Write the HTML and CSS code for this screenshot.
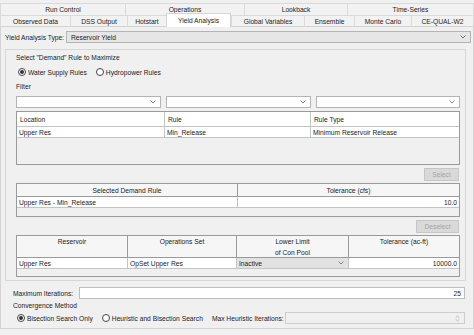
FILE: index.html
```html
<!DOCTYPE html>
<html>
<head>
<meta charset="utf-8">
<link rel="stylesheet" href="styles.css">
</head>
<body>
<div class="app">
  <div class="tabs">
    <div class="tabrow r1">
      <div class="tab w125">Run Control</div>
      <div class="tab w119">Operations</div>
      <div class="tab w103">Lookback</div>
      <div class="tab w127 last">Time-Series</div>
    </div>
    <div class="tabrow r2">
      <div class="tab w70">Observed Data</div>
      <div class="tab w57">DSS Output</div>
      <div class="tab w39">Hotstart</div>
      <div class="tab w65 sel">Yield Analysis</div>
      <div class="tab w73">Global Variables</div>
      <div class="tab w50">Ensemble</div>
      <div class="tab w57">Monte Carlo</div>
      <div class="tab w63 last">CE-QUAL-W2</div>
    </div>
  </div>

  <div class="panel">
    <div class="typerow">
      <span class="typelabel">Yield Analysis Type:</span>
      <div class="combo gray grow">
        <span class="ctext">Reservoir Yield</span>
        <svg class="chev" width="6" height="4" viewBox="0 0 6 4"><path d="M0.5 0.5 L3 3 L5.5 0.5" fill="none" stroke="#666" stroke-width="0.9"/></svg>
      </div>
    </div>

    <div class="group">
      <div class="gtitle">Select "Demand" Rule to Maximize</div>
      <div class="radios top">
        <span class="radio on"></span><span class="rlabel">Water Supply Rules</span>
        <span class="radio"></span><span class="rlabel">Hydropower Rules</span>
      </div>
      <div class="flabel">Filter</div>
      <div class="filters">
        <div class="combo white f1"><span class="ctext"></span><svg class="chev" width="6" height="4" viewBox="0 0 6 4"><path d="M0.5 0.5 L3 3 L5.5 0.5" fill="none" stroke="#777" stroke-width="0.9"/></svg></div>
        <div class="combo white f2"><span class="ctext"></span><svg class="chev" width="6" height="4" viewBox="0 0 6 4"><path d="M0.5 0.5 L3 3 L5.5 0.5" fill="none" stroke="#777" stroke-width="0.9"/></svg></div>
        <div class="combo white f3"><span class="ctext"></span><svg class="chev" width="6" height="4" viewBox="0 0 6 4"><path d="M0.5 0.5 L3 3 L5.5 0.5" fill="none" stroke="#777" stroke-width="0.9"/></svg></div>
      </div>

      <div class="tbl t1">
        <div class="trow h1">
          <div class="cell">Location</div><div class="cell">Rule</div><div class="cell nb">Rule Type</div>
        </div>
        <div class="trow d1">
          <div class="cell">Upper Res</div><div class="cell">Min_Release</div><div class="cell nb">Minimum Reservoir Release</div>
        </div>
      </div>

      <div class="btnrow"><div class="btn bsel">Select</div></div>

      <div class="tbl t2">
        <div class="trow h2">
          <div class="hcell">Selected Demand Rule</div><div class="hcell nb">Tolerance (cfs)</div>
        </div>
        <div class="trow d2">
          <div class="cell">Upper Res - Min_Release</div><div class="cell nb num">10.0</div>
        </div>
      </div>

      <div class="btnrow"><div class="btn bdes">Deselect</div></div>

      <div class="tbl t3">
        <div class="trow h3">
          <div class="hcell">Reservoir</div><div class="hcell">Operations Set</div><div class="hcell">Lower Limit<br>of Con Pool</div><div class="hcell nb">Tolerance (ac-ft)</div>
        </div>
        <div class="trow d3">
          <div class="cell">Upper Res</div><div class="cell">OpSet Upper Res</div>
          <div class="cell cbcell">Inactive<svg class="chev" width="6" height="4" viewBox="0 0 6 4"><path d="M0.5 0.5 L3 3 L5.5 0.5" fill="none" stroke="#777" stroke-width="0.9"/></svg></div>
          <div class="cell nb num">10000.0</div>
        </div>
      </div>
    </div>

    <div class="iterrow">
      <span class="itlabel">Maximum Iterations:</span>
      <div class="field grow num">25</div>
    </div>
    <div class="convlabel">Convergence Method</div>
    <div class="radios bottom">
      <span class="radio on"></span><span class="rlabel">Bisection Search Only</span>
      <span class="radio"></span><span class="rlabel">Heuristic and Bisection Search</span>
      <span class="mhlabel">Max Heuristic Iterations:</span>
      <div class="field disabled grow">
        <svg class="spin" width="5" height="7" viewBox="0 0 5 7"><path d="M0.8 2.6 L2.5 1 L4.2 2.6 M0.8 4.4 L2.5 6 L4.2 4.4" fill="none" stroke="#b0b0b0" stroke-width="0.8"/></svg>
      </div>
    </div>
  </div>
</div>
</body>
</html>
```

FILE: styles.css
```css
* { box-sizing: border-box; }
html, body { margin: 0; padding: 0; }
body {
  width: 474px;
  height: 335px;
  background: #f0f0f0;
  font-family: "Liberation Sans", Arial, sans-serif;
  font-size: 6.7px;
  color: #222;
  overflow: hidden;
}
.app { width: 474px; height: 335px; display: flex; flex-direction: column; }

/* tabs */
.tabs { height: 27px; padding-top: 3px; display: flex; flex-direction: column; background: #f0f0f0; }
.tabrow { display: flex; }
.r1 { height: 12px; }
.r2 { height: 12px; align-items: flex-end; }
.tab {
  display: flex; align-items: center; justify-content: center;
  border-left: 1px solid #dadada;
  border-top: 1px solid #dadada;
  background: #f2f2f2;
  color: #222;
  white-space: nowrap;
  height: 100%;
}
.r1 .tab { padding-bottom: 1px; }
.r2 .tab { border-bottom: 1px solid #d4d4d4; height: 12px; }
.r2 .tab.sel {
  background: #ffffff;
  border: 1px solid #d4d4d4;
  border-bottom: none;
  height: 14px;
  margin-top: -2px;
  padding-bottom: 1px;
}
.tab.last { border-right: 1px solid #dadada; }
.w125 { width: 125px; } .w119 { width: 119px; } .w103 { width: 103px; } .w127 { width: 127px; }
.w70 { width: 70px; } .w57 { width: 57px; } .w39 { width: 39px; } .w65 { width: 65px; }
.w73 { width: 73px; } .w50 { width: 50px; } .w63 { width: 63px; }

/* panel */
.panel {
  height: 302px;
  border-left: 1px solid #d4d4d4;
  border-right: 1px solid #d4d4d4;
  border-bottom: 1px solid #d4d4d4;
  display: flex; flex-direction: column;
  background: #f0f0f0;
}
.typerow { display: flex; align-items: center; height: 12px; margin-top: 4px; padding-left: 4px; padding-right: 2px; }
.typelabel { width: 61px; white-space: nowrap; }
.grow { flex: 1; }
.combo {
  height: 12px; border: 1px solid #b4b4b4;
  display: flex; align-items: center; justify-content: space-between;
  padding: 0 4px 0 4px;
}
.combo.gray { background: #e6e6e6; }
.combo.white { background: #ffffff; }
.ctext { white-space: nowrap; }
.chev { display: block; }

.group {
  margin: 6px 7px 0 4px;
  height: 232px;
  border: 1px solid #d6d6d6;
  padding: 0 5px 0 10px;
  display: flex; flex-direction: column;
}
.gtitle { margin-top: 3px; height: 9px; line-height: 9px; }
.radios { display: flex; align-items: center; }
.radios.top { margin-top: 5px; height: 10px; padding-left: 2px; }
.radio {
  width: 8px; height: 8px; border-radius: 50%;
  border: 1px solid #444; background: #fff;
  display: inline-flex; align-items: center; justify-content: center;
  flex: none;
}
.radio.on::after { content: ""; width: 4px; height: 4px; border-radius: 50%; background: #333; }
.rlabel { margin-left: 2px; margin-right: 9px; white-space: nowrap; }
.flabel { margin-top: 5px; height: 9px; line-height: 9px; }
.filters { margin-top: 5px; display: flex; height: 12px; }
.f1 { width: 145px; margin-right: 5px; }
.f2 { width: 145px; margin-right: 5px; }
.f3 { width: 144px; }

.tbl { border: 1px solid #9a9a9a; background: #f0f0f0; display: flex; flex-direction: column; }
.trow { display: grid; }
.cell { border-right: 1px solid #c4c4c4; padding: 0 2px; white-space: nowrap; display: flex; align-items: center; }
.cell.nb, .hcell.nb { border-right: none; }
.num { justify-content: flex-end; }
.hcell { border-right: 1px solid #9a9a9a; display: flex; justify-content: center; text-align: center; white-space: nowrap; }

.t1 { margin-top: 3px; height: 54px; }
.t1 .trow { grid-template-columns: 148px 146px 1fr; background: #fff; }
.h1 { height: 15px; border-bottom: 1px solid #c4c4c4; }
.h1 .cell { padding-left: 3px; }
.d1 { height: 11px; border-bottom: 1px solid #c4c4c4; }

.btnrow { display: flex; justify-content: flex-end; padding-right: 1px; }
.btn {
  height: 13px; border: 1px solid #c6c6c6; background: #d9d9d9; color: #a6a6a6;
  display: flex; align-items: center; justify-content: center;
}
.bsel { width: 35px; margin-top: 3px; }
.bdes { width: 43px; margin-top: 3px; }

.t2 { margin-top: 2px; height: 34px; }
.t2 .trow { grid-template-columns: 221px 1fr; }
.h2 { height: 13px; background: #f6f6f6; border-bottom: 1px solid #9a9a9a; }
.h2 .hcell { align-items: center; }
.d2 { height: 11px; background: #fff; border-bottom: 1px solid #c4c4c4; }

.t3 { margin-top: 2px; height: 42px; }
.t3 .trow { grid-template-columns: 111px 109px 112px 1fr; }
.h3 { height: 22px; background: #f6f6f6; border-bottom: 1px solid #9a9a9a; }
.h3 .hcell { padding-top: 0; line-height: 11px; }
.d3 { height: 11px; background: #fff; border-bottom: 1px solid #c4c4c4; }
.cbcell { background: #e2e2e2; justify-content: space-between; padding-right: 4px; }

.iterrow { display: flex; align-items: center; height: 12px; margin-top: 6px; padding-left: 12px; padding-right: 8px; }
.itlabel { width: 66px; white-space: nowrap; }
.field {
  height: 12px; border: 1px solid #bdbdbd; background: #fff;
  display: flex; align-items: center; padding: 0 3px;
}
.field.num { justify-content: flex-end; }
.field.disabled { background: #f0f0f0; border-color: #cdcdcd; justify-content: flex-end; padding-right: 4px; }
.convlabel { margin-top: 2px; height: 9px; line-height: 9px; padding-left: 12px; }
.radios.bottom { margin-top: 2px; height: 12px; padding-left: 16px; padding-right: 8px; }
.radios.bottom .rlabel { margin-left: 2px; margin-right: 9px; }
.mhlabel { white-space: nowrap; margin-right: 1px; }
.spin { display: block; }
```
